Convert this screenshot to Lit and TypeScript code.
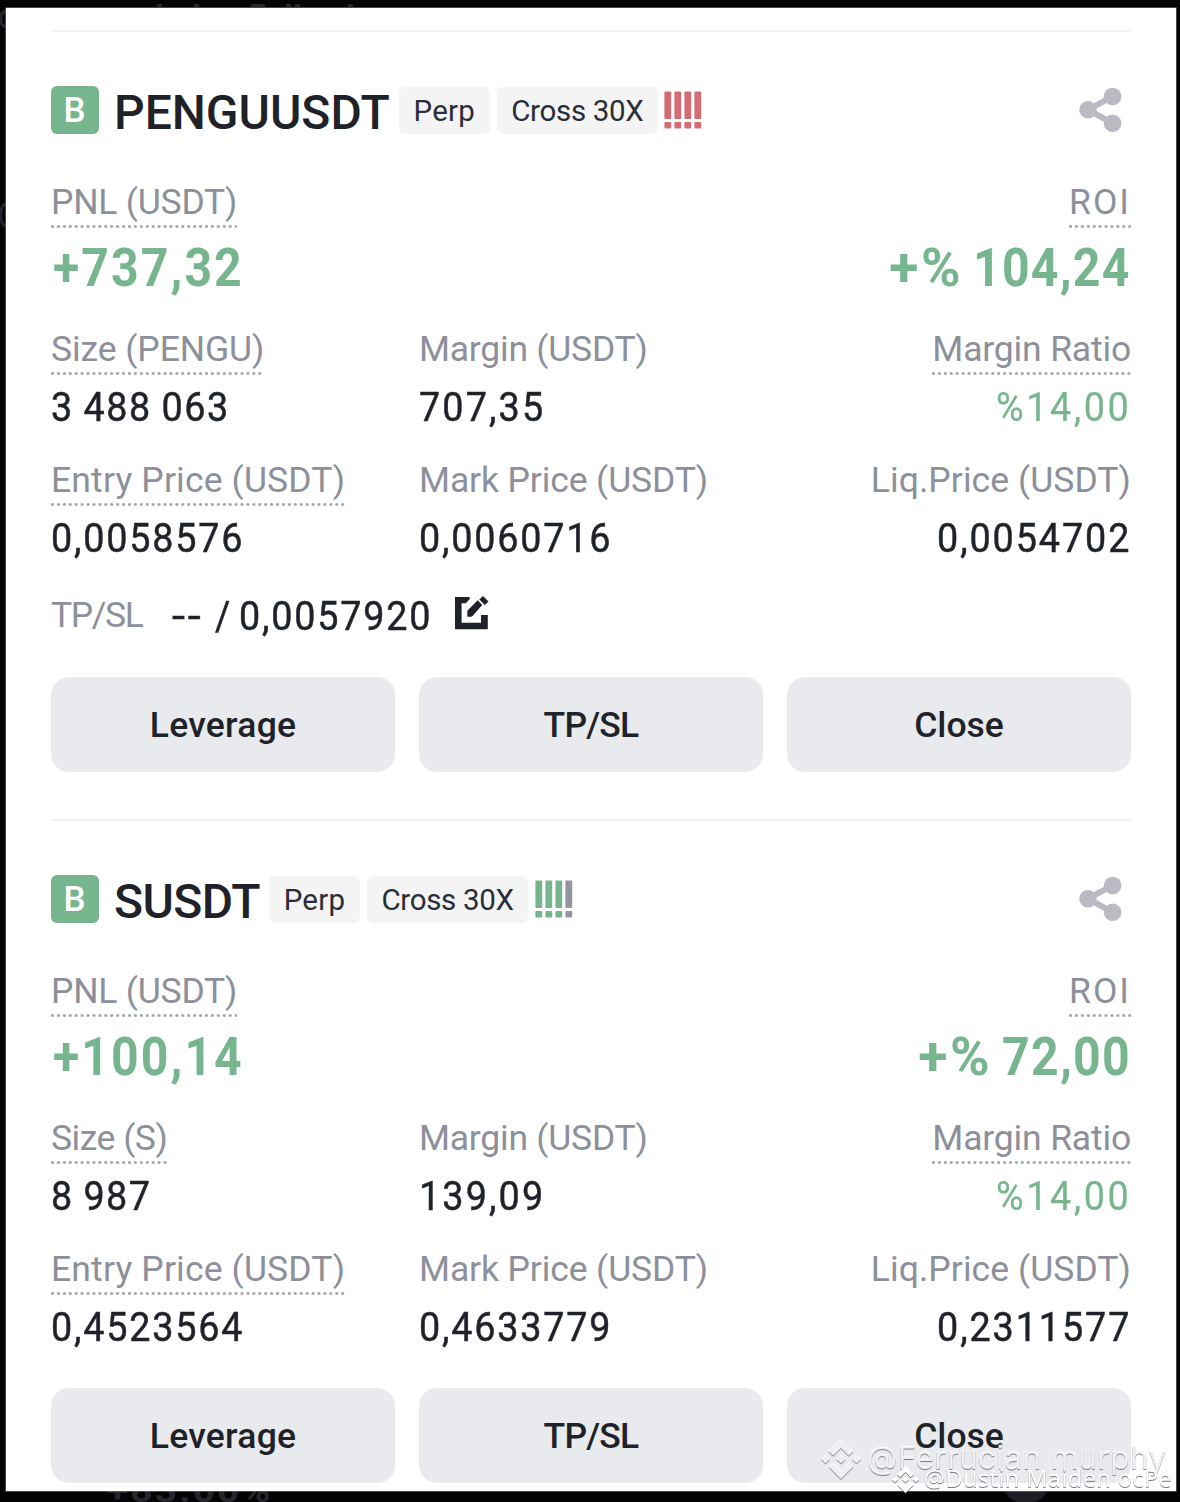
import { LitElement, html, svg, css, nothing } from "lit";
import { customElement, property } from "lit/decorators.js";
import { classMap } from "lit/directives/class-map.js";

interface Field {
  label: string;
  labelWidth: number;
  value: string;
  valueWidth: number;
  dotted?: boolean;
  end?: boolean;
  up?: boolean;
}

interface Position {
  symbol: string;
  symbolWidth: number;
  risk: string[];
  pnl: string;
  pnlWidth: number;
  roi: string;
  roiWidth: number;
  fields: Field[];
  stop?: string;
}

const RED = "#d36c73";
const GREEN = "#76b58d";
const GREY = "#93959f";

const POSITIONS: Position[] = [
  {
    symbol: "PENGUUSDT",
    symbolWidth: 276,
    risk: [RED, RED, RED, RED],
    pnl: "+737,32",
    pnlWidth: 191,
    roi: "104,24",
    roiWidth: 158,
    fields: [
      { label: "Size (PENGU)", labelWidth: 213, value: "3 488 063", valueWidth: 179, dotted: true },
      { label: "Margin (USDT)", labelWidth: 229, value: "707,35", valueWidth: 126 },
      { label: "Margin Ratio", labelWidth: 199, value: "%14,00", valueWidth: 135, dotted: true, end: true, up: true },
      { label: "Entry Price (USDT)", labelWidth: 294, value: "0,0058576", valueWidth: 193, dotted: true },
      { label: "Mark Price (USDT)", labelWidth: 289, value: "0,0060716", valueWidth: 193 },
      { label: "Liq.Price (USDT)", labelWidth: 260, value: "0,0054702", valueWidth: 194, end: true },
    ],
    stop: "0,0057920",
  },
  {
    symbol: "SUSDT",
    symbolWidth: 146,
    risk: [GREEN, GREEN, GREEN, GREY],
    pnl: "+100,14",
    pnlWidth: 191,
    roi: "72,00",
    roiWidth: 129,
    fields: [
      { label: "Size (S)", labelWidth: 116, value: "8 987", valueWidth: 100, dotted: true },
      { label: "Margin (USDT)", labelWidth: 229, value: "139,09", valueWidth: 126 },
      { label: "Margin Ratio", labelWidth: 199, value: "%14,00", valueWidth: 135, dotted: true, end: true, up: true },
      { label: "Entry Price (USDT)", labelWidth: 294, value: "0,4523564", valueWidth: 193, dotted: true },
      { label: "Mark Price (USDT)", labelWidth: 289, value: "0,4633779", valueWidth: 193 },
      { label: "Liq.Price (USDT)", labelWidth: 260, value: "0,2311577", valueWidth: 194, end: true },
    ],
  },
];

/**
 * One line of text whose tracking is adjusted so that it fills a given width.
 * A squeeze below 1 condenses the glyphs first, above 1 it widens them.
 */
@customElement("fit-text")
class FitText extends LitElement {
  static styles = css`
    :host { display: inline-block; white-space: pre; }
    .line { display: inline-block; transform-origin: left center; }
  `;
  @property() text = "";
  @property({ type: Number }) width = 0;
  @property({ type: Number }) squeeze = 1;

  render() {
    return html`<span class="line">${this.text}</span>`;
  }

  updated() {
    const line = this.renderRoot.querySelector<HTMLElement>(".line")!;
    line.style.letterSpacing = "0px";
    const natural = line.offsetWidth;
    const tracking = (this.width / this.squeeze - natural) / this.text.length;
    line.style.letterSpacing = `${tracking.toFixed(3)}px`;
    if (this.squeeze !== 1) {
      line.style.transform = `scaleX(${this.squeeze})`;
      this.style.width = `${this.width}px`;
    }
  }
}

const fit = (text: string, width: number, squeeze = 1) =>
  html`<fit-text .text=${text} .width=${width} .squeeze=${squeeze}></fit-text>`;

const shareIcon = html`<svg class="share" viewBox="0 0 48 48" width="48" height="48">
  <path d="M36.7 10.3 12 23.7 36.7 37.3" fill="none" stroke="#babbc2" stroke-width="6" />
  <circle cx="12" cy="23.7" r="8.8" fill="#babbc2" />
  <circle cx="36.6" cy="10.5" r="8.8" fill="#babbc2" />
  <circle cx="36.6" cy="37.2" r="8.8" fill="#babbc2" />
</svg>`;

const editIcon = html`<svg class="edit" viewBox="0 0 34 34" width="34" height="34">
  <path d="M0 1H14.6V3.2L10.8 7.2H6.6V26.7H26V19H32.8V33.2H0Z" />
  <path d="M12.3 20.7V14.7L22.7 4.3 27.3 8.9 18 19.5 16.5 20.7Z" />
  <path d="M28 0 33.5 5.4 29.8 9 24.3 3.5Z" />
</svg>`;

const diamondLogo = (size: number) => html`<svg viewBox="0 0 24 24" width=${size} height=${size}>
  <path d="M16.62 13.92l2.72 2.72-7.35 7.35-7.36-7.35 2.72-2.72 4.64 4.66zM21.26 9.28 24 12l-2.72 2.72L18.57 12zM11.99 9.28l2.71 2.7-2.71 2.71L9.27 12zM2.72 9.28 5.41 12l-2.69 2.69L0 12zM11.99.01l7.35 7.33-2.72 2.72-4.63-4.64-4.64 4.66-2.72-2.72z" />
</svg>`;

@customElement("position-card")
class PositionCard extends LitElement {
  static styles = css`
    :host { display: block; }
    .card { border-top: 2px solid #f4f4f5; padding-top: 54px; display: flex; flex-direction: column; }
    .head { display: flex; align-items: center; height: 48px; }
    .side {
      box-sizing: border-box; width: 48px; height: 48px; border-radius: 6px; background: #76b58d; color: #fff;
      font-size: 35px; line-height: 50px; font-weight: 500; text-align: center; padding-right: 1px;
    }
    .symbol { margin-left: 15px; padding-top: 6px; font-size: 48px; line-height: 48px; font-weight: 500; color: #1f2329; }
    .tag {
      box-sizing: border-box; height: 47px; border-radius: 6px; background: #f4f4f5; color: #2a2e38;
      font-size: 29.5px; line-height: 49px; margin-left: 7px; text-align: center;
    }
    .perp { width: 91px; margin-left: 9px; }
    .cross { width: 161px; }
    .risk { margin-left: 6.5px; }
    .share { margin-left: auto; margin-right: 7px; }
    .totals { display: flex; justify-content: space-between; margin-top: 48px; }
    .cell { display: flex; flex-direction: column; align-items: flex-start; }
    .cell.end { align-items: flex-end; }
    .label { font-size: 35.5px; line-height: 40px; height: 46px; color: #8d909a; }
    .dotted {
      background: radial-gradient(circle at 1.5px 1.5px, #a3a5ad 1.2px, transparent 1.7px) left bottom / 5.93px 3px repeat-x;
    }
    .total {
      display: flex; font-size: 53.5px; line-height: 60px; margin: 10px 0 -1px; font-weight: 700; color: #76b58d;
    }
    .pnl { padding-left: 2px; }
    .amount { margin-left: 10px; }
    .fields { display: grid; grid-template-columns: repeat(3, 344px); column-gap: 24px; row-gap: 32px; margin-top: 32px; }
    .value {
      font-size: 41px; line-height: 44px; margin: 10px 0 -1px; color: #1f2329;
      -webkit-text-stroke: 0.5px currentColor; word-spacing: -1px;
    }
    .up { color: #76b58d; -webkit-text-stroke-width: 0.2px; }
    .stop { display: flex; align-items: center; height: 40px; margin-top: 36px; }
    .stop .label { height: 40px; }
    .stop .value { display: flex; margin: 2px 0 0 30px; line-height: 40px; }
    .slash { margin-left: 11px; }
    .level { margin-left: 10px; }
    .edit { fill: #1f2329; margin-left: 23px; margin-top: -5px; }
    .actions { display: grid; grid-template-columns: repeat(3, 344px); column-gap: 24px; margin-top: 42px; }
    .actions.near { margin-top: 39.5px; }
    .button {
      height: 95px; border-radius: 18px; background: #e9eaee; color: #1f2329;
      font-size: 35.5px; line-height: 97px; font-weight: 500; text-align: center;
    }
  `;
  @property({ attribute: false }) data!: Position;

  private bars() {
    return html`<svg class="risk" viewBox="0 0 38 38" width="38" height="38">
      ${this.data.risk.map(
        (c, i) => svg`<rect x=${i * 10 + 0.4} y="0.5" width="6.8" height="27.5" rx="1" fill=${c} />
          <rect x=${i * 10 + 0.4} y="31" width="6.8" height="6.6" rx="1" fill=${c} />`,
      )}
    </svg>`;
  }

  render() {
    const p = this.data;
    return html`<section class="card">
      <header class="head">
        <span class="side">B</span>
        <span class="symbol">${fit(p.symbol, p.symbolWidth)}</span>
        <span class="tag perp">${fit("Perp", 62)}</span>
        <span class="tag cross">${fit("Cross 30X", 132)}</span>
        ${this.bars()} ${shareIcon}
      </header>
      <div class="totals">
        <div class="cell">
          <span class="label dotted">${fit("PNL (USDT)", 186)}</span>
          <span class="total pnl">${fit(p.pnl, p.pnlWidth, 0.9)}</span>
        </div>
        <div class="cell end">
          <span class="label dotted">${fit("ROI", 62)}</span>
          <span class="total">${fit("+%", 74)}<span class="amount">${fit(p.roi, p.roiWidth, 0.9)}</span></span>
        </div>
      </div>
      <div class="fields">
        ${p.fields.map(
          (f) => html`<div class=${classMap({ cell: true, end: !!f.end })}>
            <span class=${classMap({ label: true, dotted: !!f.dotted })}>${fit(f.label, f.labelWidth)}</span>
            <span class=${classMap({ value: true, up: !!f.up })}>${fit(f.value, f.valueWidth, 0.92)}</span>
          </div>`,
        )}
      </div>
      ${p.stop
        ? html`<div class="stop">
            <span class="label">${fit("TP/SL", 91)}</span>
            <span class="value">
              ${fit("--", 32, 1.15)}
              <span class="slash">${fit("/", 14, 0.9)}</span>
              <span class="level">${fit(p.stop, 193, 0.92)}</span>
            </span>
            ${editIcon}
          </div>`
        : nothing}
      <div class=${classMap({ actions: true, near: !p.stop })}>
        <div class="button">${fit("Leverage", 147)}</div>
        <div class="button">${fit("TP/SL", 95)}</div>
        <div class="button">${fit("Close", 90)}</div>
      </div>
    </section>`;
  }
}

@customElement("app-root")
class AppRoot extends LitElement {
  static styles = css`
    :host { display: block; font-family: Roboto, "Liberation Sans", sans-serif; }
    .backdrop {
      position: relative; box-sizing: border-box; width: 1180px; height: 1502px; overflow: hidden;
      background: #040404; padding: 8px 4px 0 6px;
    }
    .sheet {
      position: relative; box-sizing: border-box; height: 1483px; background: #fff; padding: 22px 45px 0;
      box-shadow: 0 0 0 0.6px #777;
    }
    .second { display: block; margin-top: 47px; }
    .ghost { position: absolute; left: 107px; top: 1473px; font-size: 34px; line-height: 34px; font-weight: 700; color: #24272e; }
    .disc { position: absolute; left: 1002px; top: 1456px; width: 48px; height: 48px; border-radius: 50%; background: #1d1f25; }
    .arc { position: absolute; left: -1px; width: 12px; border-radius: 50%; border: 3px solid #24272e; box-sizing: border-box; }
    .upper { top: 10px; height: 18px; }
    .lower { top: 203px; height: 24px; }
    .specks { position: absolute; left: 157px; top: 4px; display: flex; }
    .speck { width: 5px; height: 3px; background: #25272c; }
    .s1 { margin-left: 32px; }
    .s2 { margin-left: 52px; width: 14px; }
    .s3 { margin-left: 21px; }
    .s4 { margin-left: 4px; }
    .s5 { margin-left: 48px; }
    .mark {
      position: absolute; display: flex; align-items: center; white-space: pre;
      filter: drop-shadow(0.6px 1px 0.5px rgba(60, 62, 72, 0.7));
    }
    .mark fit-text { margin-top: -4px; }
    .large {
      left: 821px; top: 1438px; height: 42px; gap: 6px; color: rgba(255, 255, 255, 0.88); fill: rgba(255, 255, 255, 0.88);
      font: 31.5px Inter, sans-serif;
    }
    .small {
      left: 892px; top: 1466px; height: 27px; gap: 5px; color: #fff; fill: #fff;
      font: 23.5px "Noto Sans", sans-serif;
    }
  `;

  render() {
    return html`<main class="backdrop">
      <div class="arc upper"></div>
      <div class="arc lower"></div>
      <div class="specks">
        <i class="speck"></i><i class="speck s1"></i><i class="speck s2"></i><i class="speck s3"></i
        ><i class="speck s4"></i><i class="speck s5"></i>
      </div>
      <div class="ghost">${fit("+83.00%", 166, 1.15)}</div>
      <div class="disc"></div>
      <div class="sheet">
        <position-card .data=${POSITIONS[0]}></position-card>
        <position-card class="second" .data=${POSITIONS[1]}></position-card>
      </div>
      <div class="mark large">${diamondLogo(40)}${fit("@Ferrucian murphy", 299)}</div>
      <div class="mark small">${diamondLogo(27)}${fit("@Dustin Maiden ocPe", 248)}</div>
    </main>`;
  }
}
